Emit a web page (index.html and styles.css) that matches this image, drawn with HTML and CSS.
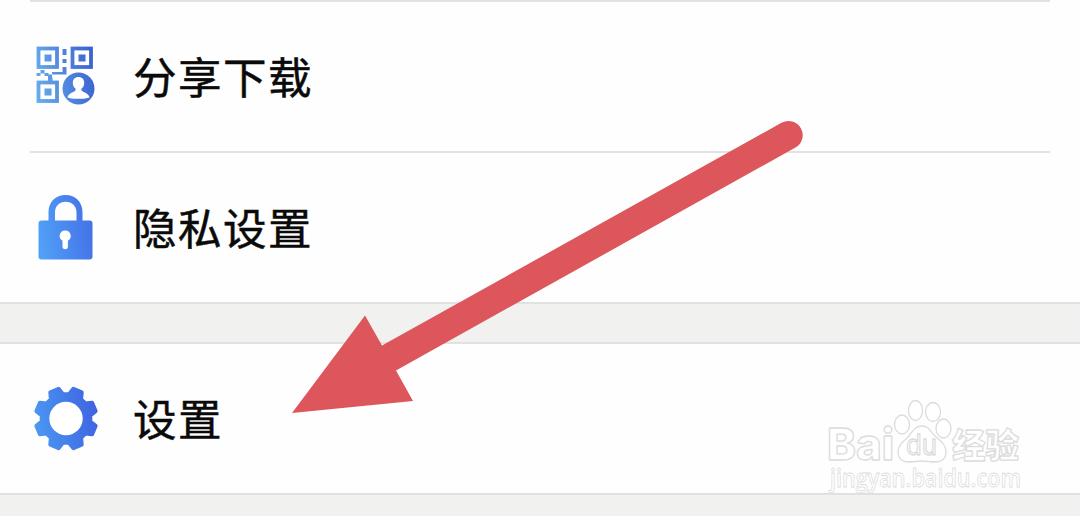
FILE: index.html
```html
<!DOCTYPE html>
<html lang="zh-CN">
<head>
    <meta charset="UTF-8">
    <meta name="viewport" content="width=device-width, initial-scale=1.0">
    <title>设置</title>
    <link rel="stylesheet" href="styles.css">
</head>
<body>
    <div class="screen">
        <ul class="menu">
            <li class="item">
                <svg class="icon" viewBox="0 4 72 72">
                    <defs>
                        <linearGradient id="qr" gradientUnits="userSpaceOnUse" x1="6" y1="40" x2="64" y2="30">
                            <stop offset="0" stop-color="#65aaea"/>
                            <stop offset="1" stop-color="#3b62d0"/>
                        </linearGradient>
                    </defs>
                    <g fill="none" stroke="url(#qr)" stroke-width="3.800">
                        <rect x="8.500" y="12.500" width="18.500" height="18.500"/>
                        <rect x="42.500" y="12.500" width="18.500" height="18.500"/>
                        <rect x="8.500" y="46.500" width="18.500" height="18.500"/>
                    </g>
                    <g fill="url(#qr)">
                        <rect x="14.500" y="18.500" width="7" height="7"/>
                        <rect x="48.500" y="18.500" width="7" height="7"/>
                        <rect x="14.500" y="52.500" width="7" height="7"/>
                        <rect x="32.500" y="13" width="4" height="6"/>
                        <rect x="32.500" y="23" width="4" height="4"/>
                        <path d="M32.500 31h4v7.500H22V42h-4v-3.500h4V36h10.500z"/>
                        <rect x="6.500" y="37" width="4" height="3"/>
                        <rect x="10.500" y="34" width="4" height="3.500"/>
                        <rect x="14.500" y="37" width="4" height="3"/>
                        <rect x="18" y="41.500" width="4.500" height="5"/>
                        <circle cx="48.500" cy="52.500" r="16"/>
                    </g>
                    <path fill="#fff" d="M48.500 41c-3.600 0-5.700 2.400-5.700 5.800 0 2.800 1.200 5 3 6.200 0 3.800-7.500 3-8.300 8.500 3 1.800 19 1.800 22 0-.8-5.500-8.300-4.700-8.300-8.500 1.800-1.200 3-3.400 3-6.200 0-3.400-2.100-5.800-5.700-5.800z"/>
                </svg>
                <span class="label">分享下载</span>
            </li>
            <li class="item">
                <svg class="icon" viewBox="-0.500 1 72 72">
                    <defs>
                        <linearGradient id="lock" x1="0" y1="0.600" x2="1" y2="0.400">
                            <stop offset="0" stop-color="#50a0f8"/>
                            <stop offset="1" stop-color="#4471e6"/>
                        </linearGradient>
                    </defs>
                    <path fill="url(#lock)" d="M11 30.500h7V22c0-10 7-17 17-17s17 7 17 17v8.500h7q3 0 3 3v33q0 3-3 3H11q-3 0-3-3v-33q0-3 3-3zM24.500 30.500h21.500V22c0-6-4.500-10.300-10.800-10.300S24.500 16 24.500 22z"/>
                    <path fill="#fff" d="M34.700 40.500a5.500 5.500 0 0 0-2.700 10.300v5.700a2.700 2.700 0 0 0 5.400 0v-5.700a5.500 5.500 0 0 0-2.700-10.300z"/>
                </svg>
                <span class="label">隐私设置</span>
            </li>
        </ul>
        <ul class="menu">
            <li class="item">
                <svg class="icon" viewBox="-36 -35.500 72 72">
                    <defs>
                        <linearGradient id="gear" gradientUnits="userSpaceOnUse" x1="-32" y1="6" x2="32" y2="-6">
                            <stop offset="0" stop-color="#4b98f3"/>
                            <stop offset="1" stop-color="#3e63e0"/>
                        </linearGradient>
                    </defs>
                    <path fill="url(#gear)" stroke="url(#gear)" stroke-width="4" stroke-linejoin="round" d="M24.300 3L29.600 7.400 26.100 15.700 19.300 15.100 15.100 19.300 15.700 26.100 7.400 29.600 3 24.300-3 24.300-7.400 29.600-15.700 26.100-15.100 19.300-19.300 15.100-26.100 15.700-29.600 7.400-24.300 3-24.300-3-29.600-7.400-26.100-15.700-19.300-15.100-15.100-19.300-15.700-26.100-7.400-29.600-3-24.300 3-24.300 7.400-29.600 15.700-26.100 15.100-19.300 19.300-15.100 26.100-15.700 29.600-7.400 24.300-3z"/>
                    <circle r="16.700" fill="#fff"/>
                </svg>
                <span class="label">设置</span>
            </li>
        </ul>

        <svg class="overlay" viewBox="0 0 1080 516">
            <g class="watermark">
                <text class="brand" x="827" y="460" textLength="67" lengthAdjust="spacingAndGlyphs">Bai</text>
                <ellipse cx="902" cy="424.500" rx="7.500" ry="9.500"/>
                <ellipse cx="915.500" cy="410.500" rx="7" ry="10"/>
                <ellipse cx="933" cy="412" rx="7.500" ry="9.500"/>
                <ellipse cx="943.500" cy="428.500" rx="7.500" ry="9.500"/>
                <path d="M922 426c-7 0-9 5-13 10s-11 8-11 16c0 7 5 10 11 10 5 0 8-1 13-1s8 1 13 1c6 0 11-3 11-10 0-8-6-11-11-16s-6-10-13-10z"/>
                <text class="du" x="906" y="455" textLength="31" lengthAdjust="spacingAndGlyphs">du</text>
                <text class="exp" x="952" y="458" textLength="67" lengthAdjust="spacingAndGlyphs">经验</text>
                <text class="site" x="830" y="487" textLength="191" lengthAdjust="spacingAndGlyphs">jingyan.baidu.com</text>
            </g>
            <path class="arrow" d="M292 413L365 315.500 382 345.500 781.500 122.800A14 14 0 0 1 795.500 147.500L396 370.500 413 401z"/>
        </svg>
    </div>
</body>
</html>
```
FILE: styles.css
```css
body {
    margin: 0;
    background-color: #f1f1ef;
    color: #0a0a0a;
    font-family: "Noto Sans CJK SC", sans-serif;
}
.screen {
    position: relative;
    height: 516px;
    overflow: hidden;
}
.menu {
    list-style: none;
    margin: 0 0 38px;
    padding: 0;
    background-color: #fefefe;
    border-bottom: 2px solid #e0e1e1;
}
.menu + .menu {
    border-top: 2px solid #e0e1e1;
}
.item {
    position: relative;
    display: flex;
    align-items: center;
    gap: 30px;
    height: 149px;
    padding-left: 30px;
}
.menu:first-child .item {
    height: 151px;
}
/* separators stop 30px before each edge */
.menu:first-child .item::before {
    content: "";
    position: absolute;
    top: 0;
    left: 30px;
    right: 30px;
    height: 2px;
    background-color: #e2e2e2;
}
.icon {
    width: 72px;
    height: 72px;
    flex: none;
}
.label {
    padding-left: 1px;
    font-size: 43.5px;
    line-height: 60px;
    letter-spacing: 1.5px;
    -webkit-text-stroke: 0.5px #0a0a0a;
}
.menu + .menu .label {
    padding-bottom: 2px;
}
.overlay {
    position: absolute;
    top: 0;
    left: 0;
    width: 1080px;
    height: 516px;
}
.arrow {
    fill: #dc565b;
}
.watermark {
    fill: #fff;
    stroke: #dcdcdc;
    stroke-width: 1.3px;
    stroke-linejoin: round;
}
.brand {
    font: 800 44px Inter, sans-serif;
}
.du {
    font: 28px Inter, sans-serif;
}
.exp {
    font: 900 34px "Noto Sans CJK SC", sans-serif;
}
.site {
    font: 600 25px "Open Sans", sans-serif;
    stroke-width: 0.8px;
}
```
